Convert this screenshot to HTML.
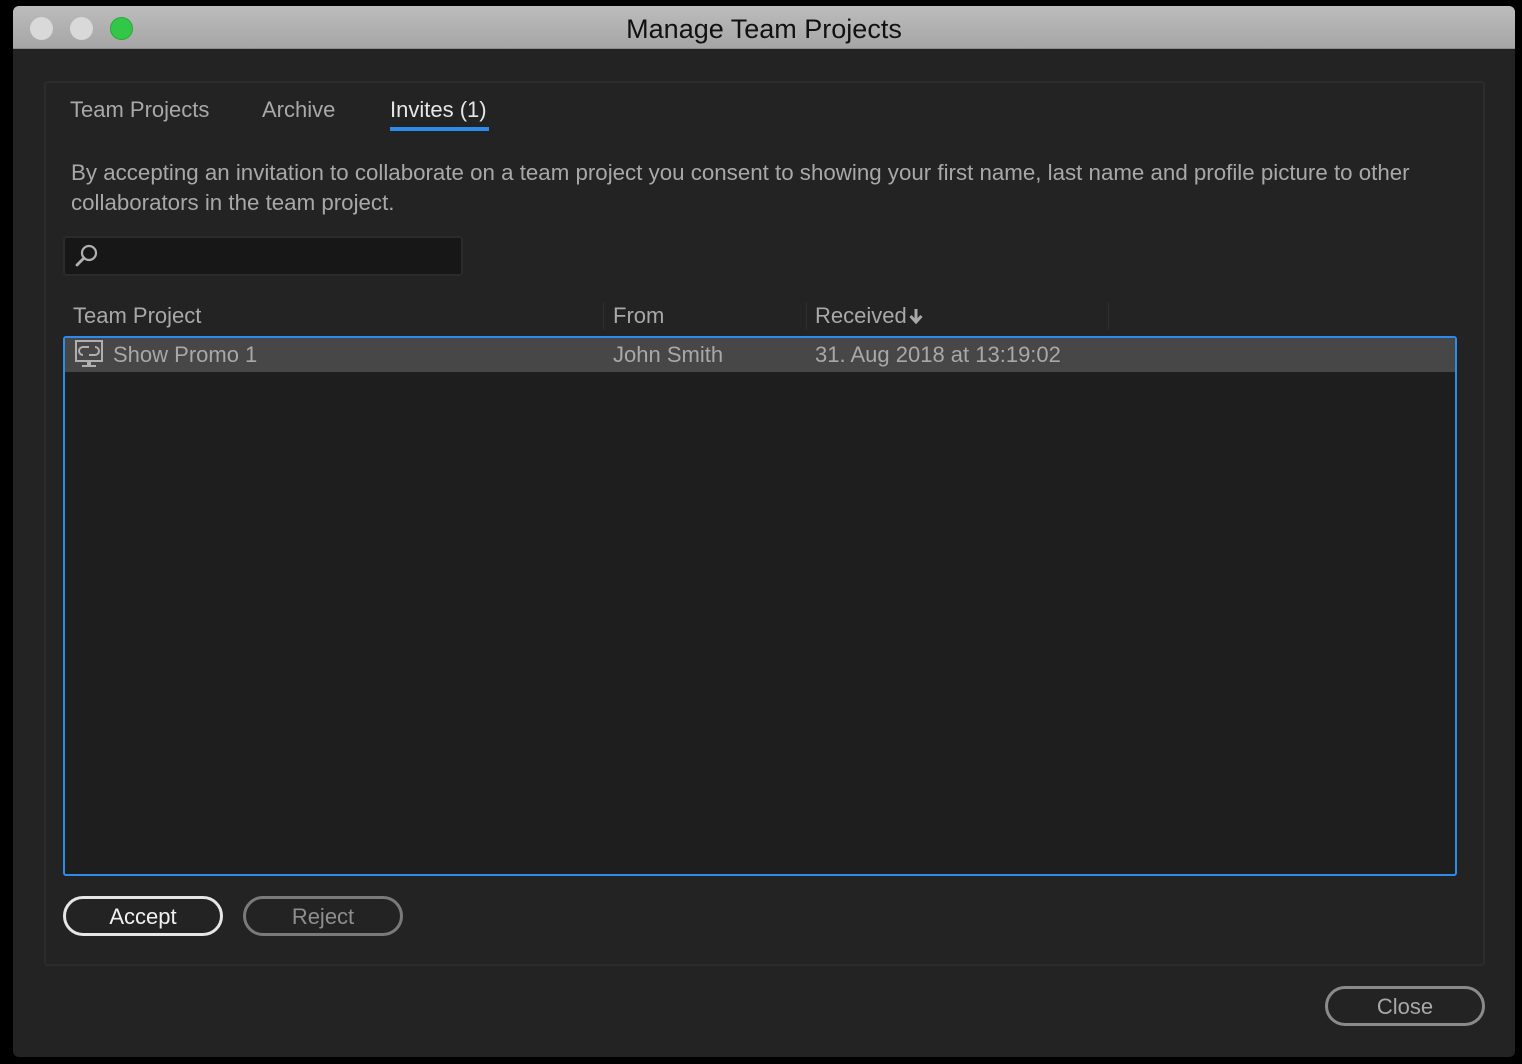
<!DOCTYPE html>
<html><head><style>
*{margin:0;padding:0;box-sizing:border-box}
body{width:1522px;height:1064px;background:#000;position:relative;overflow:hidden;font-family:"Liberation Sans",sans-serif;}
.win{position:absolute;left:13px;top:6px;width:1502px;height:1051px;background:#232323;border-radius:6px;overflow:hidden}
.title{position:absolute;left:0;top:0;width:100%;height:43px;background:linear-gradient(#bcbcbc,#a6a6a6);border-bottom:1px solid #8c8c8c;text-align:center;line-height:46px;font-size:27px;color:#111}
.dot{position:absolute;top:11px;width:23px;height:23px;border-radius:50%;background:#d9d9d9}
.panel{position:absolute;left:31px;top:75px;width:1441px;height:885px;border:2px solid #2c2c2c;border-radius:4px}
.t{position:absolute;font-size:22px;color:#a8a8a8;white-space:nowrap}
.abs{position:absolute}
.btn{position:absolute;height:40px;border-radius:20px;font-size:22px;text-align:center;line-height:36px}
</style></head><body>
<div class="win">
<div class="title">Manage Team Projects</div>
<div class="dot" style="left:17px"></div>
<div class="dot" style="left:57px"></div>
<div class="dot" style="left:97px;background:#33c748;border:1px solid #2aa83b"></div>
<div class="panel"></div>
</div>
<div class="t" style="left:70px;top:97px">Team Projects</div>
<div class="t" style="left:262px;top:97px">Archive</div>
<div class="t" style="left:390px;top:97px;color:#e6e6e6">Invites (1)</div>
<div class="abs" style="left:390px;top:127px;width:99px;height:4px;background:#2d8ceb"></div>
<div class="t" style="left:71px;top:158px;font-size:22.3px;line-height:30px;white-space:normal;width:1420px">By accepting an invitation to collaborate on a team project you consent to showing your first name, last name and profile picture to other collaborators in the team project.</div>
<div class="abs" style="left:63px;top:236px;width:400px;height:40px;background:#171717;border:2px solid #2b2b2b;border-radius:4px"></div>
<svg class="abs" style="left:73px;top:242px" width="28" height="28" viewBox="0 0 28 28"><circle cx="16" cy="11" r="7" fill="none" stroke="#b0b0b0" stroke-width="2.2"/><path d="M11 16 L4 23" stroke="#b0b0b0" stroke-width="2.8" stroke-linecap="round"/></svg>
<div class="t" style="left:73px;top:303px">Team Project</div>
<div class="abs" style="left:603px;top:302px;width:1px;height:28px;background:#2e2e2e"></div>
<div class="t" style="left:613px;top:303px">From</div>
<div class="abs" style="left:806px;top:302px;width:1px;height:28px;background:#2e2e2e"></div>
<div class="t" style="left:815px;top:303px">Received</div>
<svg class="abs" style="left:907px;top:306px" width="18" height="20" viewBox="0 0 18 20"><path d="M9 3 V15 M3.5 10 L9 16 L14.5 10" fill="none" stroke="#a8a8a8" stroke-width="3"/></svg>
<div class="abs" style="left:1108px;top:302px;width:1px;height:28px;background:#2e2e2e"></div>
<div class="abs" style="left:63px;top:336px;width:1394px;height:540px;background:#1e1e1e;border:2px solid #2d8ceb;border-radius:3px"></div>
<div class="abs" style="left:65px;top:338px;width:1390px;height:34px;background:#474747"></div>
<svg class="abs" style="left:74px;top:339px" width="30" height="30" viewBox="0 0 30 30"><rect x="2" y="2" width="26" height="20" fill="none" stroke="#b0b0b0" stroke-width="2"/><path d="M9 16 a4 4 0 0 1 0-8 h6 M21 8 a4 4 0 0 1 0 8 h-6" fill="none" stroke="#b0b0b0" stroke-width="2"/><rect x="13" y="22" width="4" height="4" fill="#b0b0b0"/><rect x="8" y="26" width="14" height="2" fill="#b0b0b0"/></svg>
<div class="t" style="left:113px;top:342px">Show Promo 1</div>
<div class="t" style="left:613px;top:342px">John Smith</div>
<div class="t" style="left:815px;top:342px">31. Aug 2018 at 13:19:02</div>
<div class="btn" style="left:63px;top:896px;width:160px;border:3px solid #e6e6e6;color:#f0f0f0">Accept</div>
<div class="btn" style="left:243px;top:896px;width:160px;border:3px solid #7a7a7a;color:#8e8e8e">Reject</div>
<div class="btn" style="left:1325px;top:986px;width:160px;border:3px solid #8a8a8a;color:#a8a8a8">Close</div>
</body></html>
